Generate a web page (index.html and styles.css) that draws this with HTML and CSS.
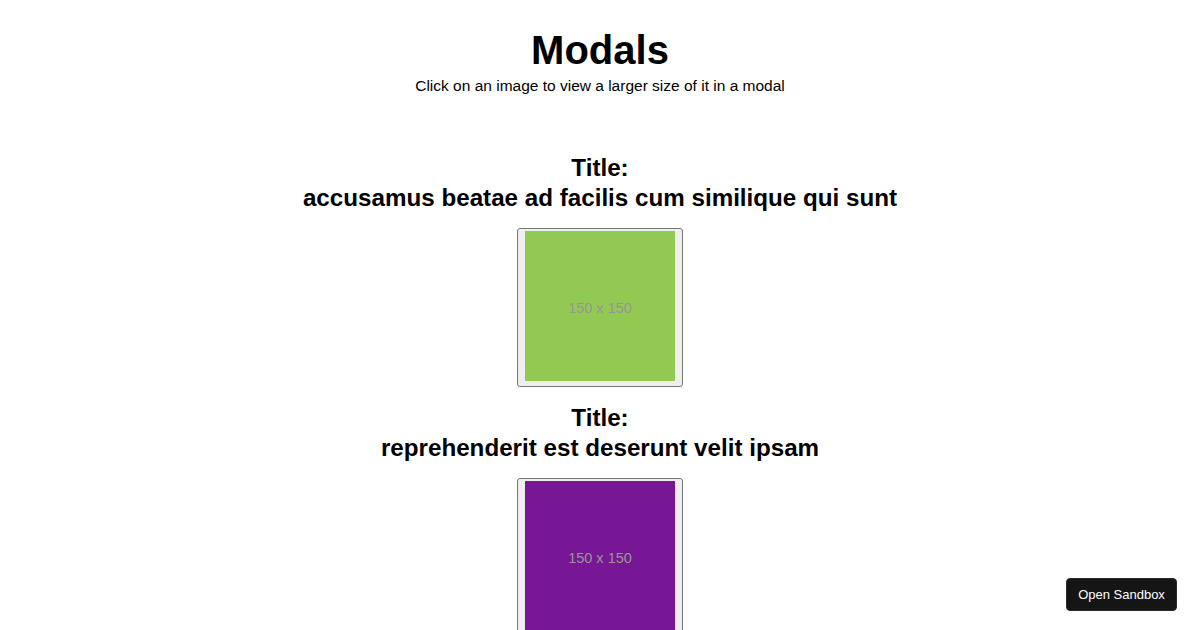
FILE: index.html
```html
<!DOCTYPE html>
<html lang="en">
<head>
<meta charset="utf-8">
<title>Modals</title>
<link rel="stylesheet" href="styles.css">
</head>
<body>
<main class="app">
  <header class="intro">
    <h1 class="intro-title">Modals</h1>
    <p class="intro-text">Click on an image to view a larger size of it in a modal</p>
  </header>
  <section class="gallery">
    <article class="photo">
      <h2 class="photo-title">Title:<br>accusamus beatae ad facilis cum similique qui sunt</h2>
      <button class="thumb" type="button">
        <span class="thumb-img thumb-green">150 x 150</span>
      </button>
    </article>
    <article class="photo">
      <h2 class="photo-title">Title:<br>reprehenderit est deserunt velit ipsam</h2>
      <button class="thumb" type="button">
        <span class="thumb-img thumb-purple">150 x 150</span>
      </button>
    </article>
  </section>
</main>
<a class="sandbox-btn" href="#">Open Sandbox</a>
</body>
</html>
```

FILE: styles.css
```css
html, body {
  margin: 0;
  padding: 0;
  background: #ffffff;
}

body {
  font-family: "Liberation Sans", Arial, sans-serif;
  color: #000000;
}

.app {
  display: flex;
  flex-direction: column;
  align-items: center;
  text-align: center;
}

.intro-title {
  margin: 27px 0 0;
  font-size: 40px;
  line-height: 46px;
  font-weight: 700;
}

.intro-text {
  margin: 4px 0 0;
  font-size: 15.5px;
  line-height: 18px;
}

.gallery {
  margin-top: 58px;
  display: flex;
  flex-direction: column;
  align-items: center;
}

.photo {
  display: flex;
  flex-direction: column;
  align-items: center;
  margin-bottom: 16px;
}

.photo-title {
  margin: 0;
  font-size: 24.2px;
  line-height: 30px;
  font-weight: 700;
}

.thumb {
  margin-top: 15px;
  padding: 2px 7px 5px;
  border: 1px solid #767676;
  border-radius: 3px;
  background: #efefef;
  cursor: pointer;
  font: inherit;
}

.thumb-img {
  display: flex;
  align-items: center;
  justify-content: center;
  box-sizing: border-box;
  width: 150px;
  height: 150px;
  padding-top: 3px;
  font-family: "Liberation Sans", Arial, sans-serif;
  font-size: 14.5px;
  color: #969696;
}

.thumb-green {
  background: #92c952;
}

.thumb-purple {
  background: #771796;
}

.sandbox-btn {
  position: fixed;
  right: 23px;
  bottom: 19px;
  width: 111px;
  height: 33px;
  display: flex;
  align-items: center;
  justify-content: center;
  box-sizing: border-box;
  background: #151515;
  border: 1px solid #2a2a2a;
  border-radius: 4px;
  color: #ffffff;
  font-family: "Liberation Sans", Arial, sans-serif;
  font-size: 13px;
  text-decoration: none;
}
```
